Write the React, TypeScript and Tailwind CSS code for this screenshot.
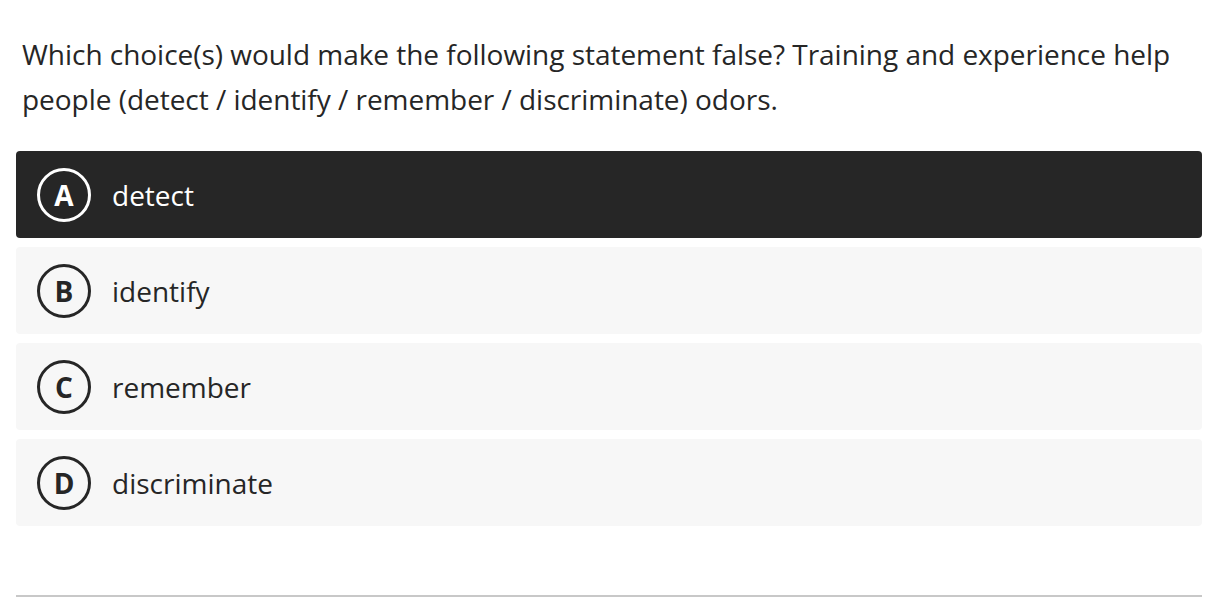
const options = [
  { letter: "A", label: "detect", selected: true },
  { letter: "B", label: "identify", selected: false },
  { letter: "C", label: "remember", selected: false },
  { letter: "D", label: "discriminate", selected: false },
];

export default function App() {
  return (
    <div
      className="min-h-[604px] w-[1230px] bg-white px-4 pt-[32px] text-[#262626]"
      style={{ fontFamily: '"Open Sans", sans-serif' }}
    >
      <p className="px-1.5 text-[28px] leading-[45px] tracking-[-0.03px]">
        Which choice(s) would make the following statement false? Training and experience help
        people (detect / identify / remember / discriminate) odors.
      </p>

      <div className="mt-[29px] flex w-[1186px] flex-col gap-[9px]">
        {options.map((o) => (
          <div
            key={o.letter}
            className={`flex h-[87px] items-center gap-[21px] rounded-[4px] px-[21px] ${
              o.selected ? "bg-[#262626] text-white" : "bg-[#f7f7f7] text-[#262626]"
            }`}
          >
            <span
              className={`flex h-[54px] w-[54px] shrink-0 items-center justify-center rounded-full border-[3px] text-[28px] font-bold ${
                o.selected ? "border-white" : "border-[#262626]"
              }`}
            >
              {o.letter}
            </span>
            <span className="text-[28px]">{o.label}</span>
          </div>
        ))}
      </div>

      <div className="mt-[69px] h-[2px] w-[1186px] bg-[#c8c8c8]" />
    </div>
  );
}
